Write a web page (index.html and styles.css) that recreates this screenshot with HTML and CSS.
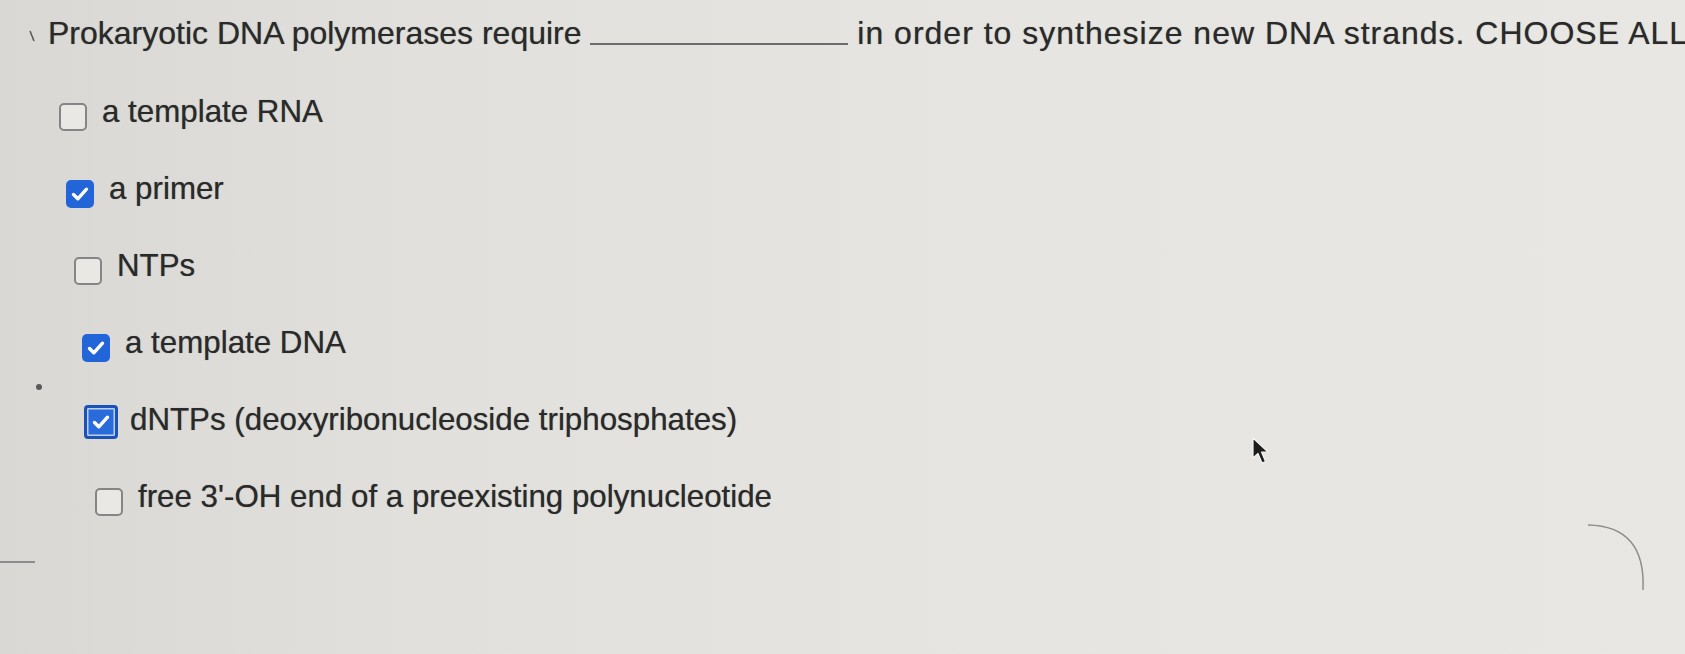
FILE: index.html
```html
<!DOCTYPE html>
<html>
<head>
  <meta charset="UTF-8">
  <title>Question</title>
  <link rel="stylesheet" href="styles.css">
</head>
<body>
  <div class="question">
    <p class="prompt">Prokaryotic DNA polymerases require <span class="blank"></span> <span class="prompt-tail">in order to synthesize new DNA strands. CHOOSE ALL</span></p>

    <ul class="options">
      <li class="option">
        <span class="box"></span>
        <span class="label">a template RNA</span>
      </li>
      <li class="option">
        <span class="box checked">
          <svg viewBox="0 0 26 26"><path d="M6.5 13.5 L10.8 17.8 L19.5 8.2"/></svg>
        </span>
        <span class="label">a primer</span>
      </li>
      <li class="option">
        <span class="box"></span>
        <span class="label">NTPs</span>
      </li>
      <li class="option">
        <span class="box checked">
          <svg viewBox="0 0 26 26"><path d="M6.5 13.5 L10.8 17.8 L19.5 8.2"/></svg>
        </span>
        <span class="label">a template DNA</span>
      </li>
      <li class="option">
        <span class="box checked focus">
          <svg viewBox="0 0 26 26"><path d="M6.5 13.5 L10.8 17.8 L19.5 8.2"/></svg>
        </span>
        <span class="label">dNTPs (deoxyribonucleoside triphosphates)</span>
      </li>
      <li class="option">
        <span class="box"></span>
        <span class="label">free 3'-OH end of a preexisting polynucleotide</span>
      </li>
    </ul>
  </div>

  <!-- pointer and small marks on the screen -->
  <svg class="marks" viewBox="0 0 1685 654">
    <path class="speck" d="M30 31 L34 41"/>
    <circle cx="39" cy="387" r="3" fill="#5a5a5a"/>
    <path class="edge" d="M0 562 L35 562"/>
    <path class="arc" d="M1588 525 Q1646 526 1643 590"/>
  </svg>
  <svg class="cursor" viewBox="0 0 22 30">
    <path d="M2 2 L2 22 L7 17.5 L11 27 L14.5 25.5 L10.5 16 L17 16 Z"/>
  </svg>
</body>
</html>
```

FILE: styles.css
```css
body {
  font-family: "Liberation Sans", Arial, Helvetica, sans-serif;
  margin: 0;
  height: 100vh;
  overflow: hidden;
  color: #2a2a2a;
  background: linear-gradient(90deg, #d9d8d4 0%, #e1e0dc 25%, #e6e5e1 60%, #e8e7e3 100%);
  position: relative;
  text-shadow: 0 0 0.8px rgba(30, 30, 30, 0.55);
}

.question {
  padding: 13px 0 0 48px;
}

.prompt {
  margin: 0;
  font-size: 32px;
  line-height: 40px;
  white-space: nowrap;
}

.prompt-tail {
  letter-spacing: 1px;
}

.blank {
  display: inline-block;
  width: 258px;
  height: 20px;
  border-bottom: 2px solid #6c6c6c;
  margin-bottom: -1px;
}

.options {
  list-style: none;
  margin: 39px 0 0 12px;
  padding: 0;
  display: flex;
  flex-direction: column;
  gap: 37px;
}

.option {
  display: flex;
  align-items: center;
  height: 40px;
  font-size: 31.3px;
  line-height: 40px;
  white-space: nowrap;
}

.option:nth-child(2) { padding-left: 7px; }
.option:nth-child(3) { padding-left: 15px; }
.option:nth-child(4) { padding-left: 23px; }
.option:nth-child(5) { padding-left: 28px; }
.option:nth-child(6) { padding-left: 36px; }

.box {
  flex: none;
  box-sizing: border-box;
  width: 28px;
  height: 28px;
  margin: 10px 15px 0 -1px;
  border: 2px solid #858585;
  border-radius: 5px;
  background-color: #e9e8e5;
  display: flex;
  align-items: center;
  justify-content: center;
}

.box.checked {
  border: none;
  background-color: #2165d8;
}

.box svg {
  width: 26px;
  height: 26px;
}

.box svg path {
  fill: none;
  stroke: #fff;
  stroke-width: 3.4;
  stroke-linecap: round;
  stroke-linejoin: round;
}

/* keyboard focus ring on the last ticked box */
.box.focus {
  width: 34px;
  height: 34px;
  margin: 4px 12px 0 -4px;
  border: 3px solid #1c52b5;
  border-radius: 4px;
  box-shadow: inset 0 0 0 1.5px #b9cff4;
  background-color: #2a6bdb;
}

.marks {
  position: absolute;
  top: 0;
  left: 0;
  width: 1685px;
  height: 654px;
  pointer-events: none;
}

.marks .speck {
  stroke: #555;
  stroke-width: 1.5;
}

.marks .edge {
  stroke: #8c8c8c;
  stroke-width: 2;
}

.marks .arc {
  fill: none;
  stroke: #8e8e8e;
  stroke-width: 1.5;
}

.cursor {
  position: absolute;
  left: 1251px;
  top: 436px;
  width: 22px;
  height: 30px;
}

.cursor path {
  fill: #1d1d1d;
  stroke: #f4f4f4;
  stroke-width: 1.2;
  stroke-linejoin: round;
}
```
